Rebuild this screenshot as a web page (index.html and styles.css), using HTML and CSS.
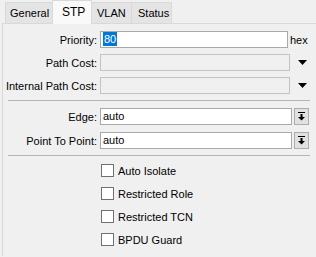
FILE: index.html
```html
<!DOCTYPE html>
<html>
<head>
<meta charset="utf-8">
<link rel="stylesheet" href="styles.css">
</head>
<body>
<div class="tabs">
  <div class="tab">General</div>
  <div class="tab active">STP</div>
  <div class="tab">VLAN</div>
  <div class="tab">Status</div>
</div>
<div class="panel">
  <div class="row">
    <div class="label">Priority:</div>
    <div class="field w-hex"><span class="sel">80</span></div>
    <div class="suffix">hex</div>
  </div>
  <div class="row">
    <div class="label">Path Cost:</div>
    <div class="field disabled w-dd"></div>
    <div class="dd"><svg width="9" height="5" viewBox="0 0 9 5"><polygon points="0,0 9,0 4.5,5" fill="#000"/></svg></div>
  </div>
  <div class="row">
    <div class="label">Internal Path Cost:</div>
    <div class="field disabled w-dd"></div>
    <div class="dd"><svg width="9" height="5" viewBox="0 0 9 5"><polygon points="0,0 9,0 4.5,5" fill="#000"/></svg></div>
  </div>
  <div class="sep"></div>
  <div class="row row-wide">
    <div class="label">Edge:</div>
    <div class="field w-btn">auto</div>
    <div class="btn"><svg width="7" height="9" viewBox="0 0 7 9"><rect x="0" y="0" width="7" height="1" fill="#000"/><rect x="2.5" y="2" width="2" height="3" fill="#000"/><polygon points="0,5 7,5 3.5,8.5" fill="#000"/></svg></div>
  </div>
  <div class="row">
    <div class="label">Point To Point:</div>
    <div class="field w-btn">auto</div>
    <div class="btn"><svg width="7" height="9" viewBox="0 0 7 9"><rect x="0" y="0" width="7" height="1" fill="#000"/><rect x="2.5" y="2" width="2" height="3" fill="#000"/><polygon points="0,5 7,5 3.5,8.5" fill="#000"/></svg></div>
  </div>
  <div class="sep sep2"></div>
  <div class="checks">
    <div class="check"><span class="box"></span><span>Auto Isolate</span></div>
    <div class="check"><span class="box"></span><span>Restricted Role</span></div>
    <div class="check"><span class="box"></span><span>Restricted TCN</span></div>
    <div class="check"><span class="box"></span><span>BPDU Guard</span></div>
  </div>
</div>
</body>
</html>
```
FILE: styles.css
```css
html, body {
  margin: 0;
  padding: 0;
  background: #f0f0f0;
  font-family: "Liberation Sans", Arial, sans-serif;
  font-size: 11px;
  color: #000;
}
.tabs {
  display: flex;
  align-items: flex-end;
  height: 23px;
  padding-left: 5px;
  box-sizing: border-box;
}
.tab {
  height: 21px;
  box-sizing: border-box;
  line-height: 20px;
  background: #e4e4e4;
  border: 1px solid #d9d9d9;
  border-bottom: none;
  margin-left: -1px;
  white-space: nowrap;
}
.tab:first-child { margin-left: 0; width: 48px; padding: 0 0 0 4px; }
.tab.active {
  height: 24px;
  margin-bottom: -1px;
  background: #f9f9f9;
  position: relative;
  width: 40px;
  padding: 0 0 0 9px;
  line-height: 22px;
  font-size: 12px;
}
.tab:nth-child(3) { width: 41px; padding-left: 5px; }
.tab:nth-child(4) { width: 41px; padding-left: 6px; }
.panel {
  border-top: 1px solid #d9d9d9;
  border-left: 1px solid #d9d9d9;
  margin-left: 2px;
  height: 233px;
  box-sizing: border-box;
  padding-top: 7px;
  background: #f0f0f0;
}
.row {
  display: flex;
  align-items: center;
  height: 17px;
  margin-bottom: 6px;
  white-space: nowrap;
}
.row-wide { margin-bottom: 7px; }
.label {
  width: 94px;
  text-align: right;
  flex: none;
}
.field {
  margin-left: 3px;
  height: 17px;
  box-sizing: border-box;
  border: 1px solid #a9a9a9;
  background: #fff;
  padding-left: 2px;
  line-height: 15px;
  flex: none;
}
.field.disabled {
  background: #f0f0f0;
  border-color: #c3c3c3;
}
.w-hex { width: 188px; }
.w-dd { width: 190px; }
.w-btn { width: 192px; }
.sel {
  background: #0078d7;
  color: #fff;
  padding: 0 1px;
  display: inline-block;
  line-height: 14px;
}
.suffix { margin-left: 2px; }
.dd {
  width: 18px;
  display: flex;
  justify-content: center;
  align-items: center;
  margin-left: 3px;
}
.btn {
  margin-left: 2px;
  width: 15px;
  height: 17px;
  box-sizing: border-box;
  border: 1px solid #adadad;
  background: #e1e1e1;
  display: flex;
  justify-content: center;
  align-items: center;
}
.sep {
  margin: 1px 6px 7px 5px;
  border-top: 1px solid #b4b4b4;
  height: 0;
}
.sep2 { margin-top: 1px; margin-bottom: 8px; }
.checks {
  padding-left: 98px;
}
.check {
  display: flex;
  align-items: center;
  height: 13px;
  margin-bottom: 10px;
  white-space: nowrap;
}
.box {
  width: 13px;
  height: 13px;
  box-sizing: border-box;
  border: 1px solid #707070;
  background: #fff;
  margin-right: 4px;
  flex: none;
}
```
